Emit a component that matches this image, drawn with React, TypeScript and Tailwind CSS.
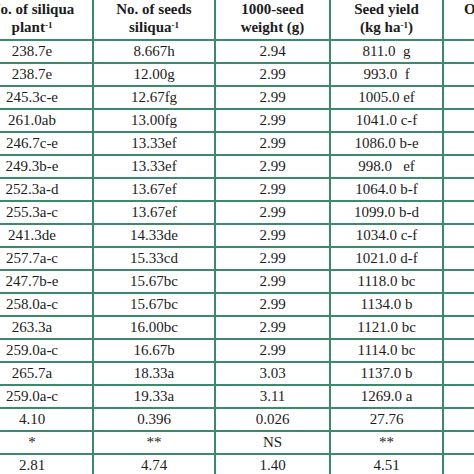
const rows: string[][] = [
  ['238.7e', '8.667h', '2.94', '811.0  g'],
  ['238.7e', '12.00g', '2.99', '993.0  f'],
  ['245.3c-e', '12.67fg', '2.99', '1005.0 ef'],
  ['261.0ab', '13.00fg', '2.99', '1041.0 c-f'],
  ['246.7c-e', '13.33ef', '2.99', '1086.0 b-e'],
  ['249.3b-e', '13.33ef', '2.99', '998.0   ef'],
  ['252.3a-d', '13.67ef', '2.99', '1064.0 b-f'],
  ['255.3a-c', '13.67ef', '2.99', '1099.0 b-d'],
  ['241.3de', '14.33de', '2.99', '1034.0 c-f'],
  ['257.7a-c', '15.33cd', '2.99', '1021.0 d-f'],
  ['247.7b-e', '15.67bc', '2.99', '1118.0 bc'],
  ['258.0a-c', '15.67bc', '2.99', '1134.0 b'],
  ['263.3a', '16.00bc', '2.99', '1121.0 bc'],
  ['259.0a-c', '16.67b', '2.99', '1114.0 bc'],
  ['265.7a', '18.33a', '3.03', '1137.0 b'],
  ['259.0a-c', '19.33a', '3.11', '1269.0 a'],
  ['4.10', '0.396', '0.026', '27.76'],
  ['*', '**', 'NS', '**'],
  ['2.81', '4.74', '1.40', '4.51'],
]

const widths = ['w-[122px]', 'w-[122px]', 'w-[115px]', 'w-[113px]', 'w-[113px]']

function Sup() {
  return <sup className="text-[9px] font-bold">-1</sup>
}

const headers = [
  [<>No. of siliqua</>, <>plant<Sup /></>],
  [<>No. of seeds</>, <>siliqua<Sup /></>],
  [<>1000-seed</>, <>weight (g)</>],
  [<>Seed yield</>, <>(kg ha<Sup />)</>],
  [<>Oil content</>, <>(%)</>],
]

export default function App() {
  return (
    <div className="h-[474px] w-[474px] overflow-hidden bg-white text-[15px] text-[#1c1c1c] [font-family:'Liberation_Serif',serif]">
      <div className="ml-[-28px] w-max">
        <div className="flex h-[41px] border-b-2 border-[#3b8a6c]">
          {headers.map((h, i) => (
            <div
              key={i}
              className={`${widths[i]} flex shrink-0 flex-col items-center border-r-2 border-[#3b8a6c] text-center font-bold leading-[18px]`}
            >
              <span className="whitespace-nowrap">{h[0]}</span>
              <span className="whitespace-nowrap">{h[1]}</span>
            </div>
          ))}
        </div>
        {rows.map((r, ri) => (
          <div key={ri} className="flex h-[23px] border-b-2 border-[#3b8a6c]">
            {[...r, ''].map((c, ci) => (
              <div
                key={ci}
                className={`${widths[ci]} shrink-0 whitespace-pre border-r-2 border-[#3b8a6c] text-center leading-[21px]`}
              >
                {c}
              </div>
            ))}
          </div>
        ))}
      </div>
    </div>
  )
}
